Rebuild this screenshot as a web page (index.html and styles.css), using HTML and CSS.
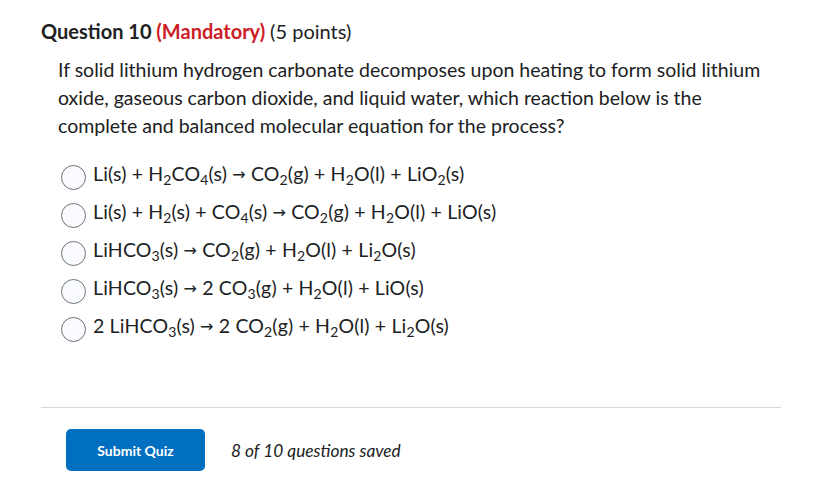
FILE: index.html
```html
<!DOCTYPE html>
<html>
<head>
<meta charset="utf-8">
<link rel="stylesheet" href="styles.css">
</head>
<body>
<div class="page">
  <h2 class="qtitle"><span class="qnum">Question 10</span> <span class="mand">(Mandatory)</span> <span class="pts">(5 points)</span></h2>
  <div class="qbody">
    <p class="prompt">If solid lithium hydrogen carbonate decomposes upon heating to form solid lithium oxide, gaseous carbon dioxide, and liquid water, which reaction below is the complete and balanced molecular equation for the process?</p>
    <ul class="options">
      <li class="opt"><span class="radio"></span><span class="lbl">Li(s) + H<sub>2</sub>CO<sub>4</sub>(s) <span class="arr">→</span> CO<sub>2</sub>(g) + H<sub>2</sub>O(l) + LiO<sub>2</sub>(s)</span></li>
      <li class="opt"><span class="radio"></span><span class="lbl">Li(s) + H<sub>2</sub>(s) + CO<sub>4</sub>(s) <span class="arr">→</span> CO<sub>2</sub>(g) + H<sub>2</sub>O(l) + LiO(s)</span></li>
      <li class="opt"><span class="radio"></span><span class="lbl">LiHCO<sub>3</sub>(s) <span class="arr">→</span> CO<sub>2</sub>(g) + H<sub>2</sub>O(l) + Li<sub>2</sub>O(s)</span></li>
      <li class="opt"><span class="radio"></span><span class="lbl">LiHCO<sub>3</sub>(s) <span class="arr">→</span> 2 CO<sub>3</sub>(g) + H<sub>2</sub>O(l) + LiO(s)</span></li>
      <li class="opt"><span class="radio"></span><span class="lbl">2 LiHCO<sub>3</sub>(s) <span class="arr">→</span> 2 CO<sub>2</sub>(g) + H<sub>2</sub>O(l) + Li<sub>2</sub>O(s)</span></li>
    </ul>
  </div>
  <hr class="divider">
  <div class="footer">
    <button class="submit">Submit Quiz</button>
    <span class="saved">8 of 10 questions saved</span>
  </div>
</div>
</body>
</html>
```
FILE: styles.css
```css
html, body {
  margin: 0;
  padding: 0;
  background: #ffffff;
}
body {
  font-family: Lato, "Noto Sans", sans-serif;
  color: #202122;
}
.page {
  padding: 18px 55px 0 41px;
}
.qtitle {
  margin: 0;
  font-size: 20px;
  font-weight: 700;
  line-height: 26px;
  color: #202122;
}
.mand {
  color: #cd2026;
}
.pts {
  font-weight: 400;
}
.qbody {
  padding-left: 17px;
  margin-top: 12px;
}
.prompt {
  margin: 0;
  font-size: 19.5px;
  line-height: 28px;
  color: #202122;
}
.options {
  list-style: none;
  margin: 14px 0 0 0;
  padding: 0 0 0 3px;
}
.opt {
  display: flex;
  align-items: center;
  gap: 7px;
  height: 38px;
  font-size: 19.5px;
}
.lbl {
  letter-spacing: 0.15px;
}
.radio {
  width: 23px;
  height: 23px;
  border: 1px solid #6e7477;
  border-radius: 50%;
  background: #f9fbff;
  flex: none;
  margin-top: 8px;
}
.lbl sub {
  font-size: 14px;
  line-height: 0;
  vertical-align: -4px;
}
.arr {
  font-family: "DejaVu Sans", sans-serif;
  font-size: 16px;
  position: relative;
  top: -1px;
}
.divider {
  border: 0;
  border-top: 1px solid #d3d9e3;
  margin: 63px 0 0 0;
}
.footer {
  display: flex;
  align-items: center;
  padding: 21px 0 0 25px;
  gap: 26px;
}
.submit {
  width: 139px;
  height: 42px;
  background: #006fbf;
  color: #ffffff;
  border: 0;
  border-radius: 5px;
  font-family: Lato, "Noto Sans", sans-serif;
  font-size: 14px;
  font-weight: 700;
}
.saved {
  font-style: italic;
  font-size: 17.3px;
  color: #202122;
}
```
